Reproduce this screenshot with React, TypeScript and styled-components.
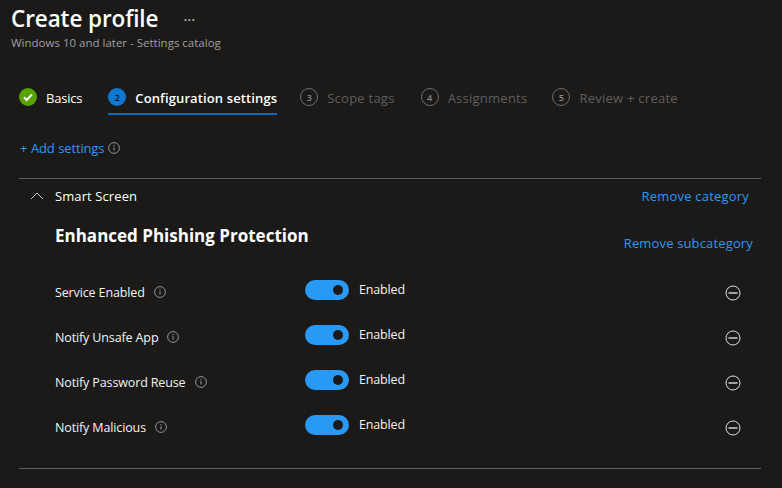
import React from "react";
import styled, { createGlobalStyle } from "styled-components";

const Global = createGlobalStyle`
  html, body { margin: 0; padding: 0; background: #1b1a19; }
  body { width: 782px; height: 488px; overflow: hidden; font-family: "Open Sans", "Noto Sans", sans-serif; }
`;

const Page = styled.div`
  height: 488px;
  padding: 0 21px 0 19px;
  box-sizing: border-box;
  background: #1b1a19;
  color: #fff;
  display: flex;
  flex-direction: column;
`;

const Header = styled.header`
  margin-left: -8px;
  height: 84px;
  padding-top: 4px;
  box-sizing: border-box;
`;

const TitleRow = styled.div`
  display: flex;
  align-items: flex-start;
  height: 30px;
`;

const Title = styled.h1`
  margin: 0;
  font-size: 22.5px;
  line-height: 30px;
  font-weight: 600;
  color: #fff;
  letter-spacing: -0.1px;
`;

const More = styled.span`
  margin: 3px 0 0 25px;
  font-size: 15px;
  line-height: 24px;
  color: #c8c6c4;
`;

const Subtitle = styled.div`
  margin-top: 1px;
  font-size: 11.5px;
  line-height: 16px;
  color: #a19f9d;
`;

const Steps = styled.nav`
  display: flex;
  height: 31px;
  align-items: flex-start;
`;

const Step = styled.div<{ $gap: number; $active?: boolean }>`
  display: flex;
  align-items: flex-start;
  gap: 9px;
  height: 31px;
  padding-top: 4px;
  margin-right: ${(p) => p.$gap}px;
  box-sizing: border-box;
  border-bottom: 2px solid ${(p) => (p.$active ? "#0f6cbd" : "transparent")};
`;

const StepIcon = styled.span<{ $state: "done" | "current" | "todo" }>`
  flex: none;
  width: 18px;
  height: 18px;
  border-radius: 50%;
  box-sizing: border-box;
  display: flex;
  align-items: center;
  justify-content: center;
  font-size: 9px;
  font-weight: 600;
  background: ${(p) => (p.$state === "done" ? "#57a300" : p.$state === "current" ? "#0f78d4" : "transparent")};
  border: ${(p) => (p.$state === "todo" ? "1px solid #6e6d6c" : "none")};
  color: ${(p) => (p.$state === "current" ? "#111" : "#8a8886")};
`;

const StepLabel = styled.span<{ $tone: "normal" | "active" | "muted" }>`
  font-size: 13px;
  line-height: 21px;
  letter-spacing: ${(p) => (p.$tone === "normal" ? "-0.2px" : p.$tone === "active" ? "0.12px" : "0.25px")};
  white-space: nowrap;
  font-weight: ${(p) => (p.$tone === "active" ? 600 : 400)};
  color: ${(p) => (p.$tone === "muted" ? "#605e5c" : "#fff")};
`;

const AddRow = styled.div`
  margin-top: 23px;
  padding-left: 1px;
  height: 40px;
  display: flex;
  align-items: flex-start;
  gap: 4px;
`;

const LinkText = styled.a`
  font-size: 13px;
  line-height: 20px;
  letter-spacing: 0.2px;
  color: #2899f5;
  white-space: nowrap;
`;

const AddLink = styled(LinkText)`
  letter-spacing: -0.15px;
  word-spacing: 0.4px;
`;

const InfoIcon = styled.svg`
  flex: none;
  width: 12px;
  height: 12px;
  color: #a19f9d;
`;

const AddInfo = styled.span`
  display: flex;
  height: 20px;
  align-items: center;
`;

const Section = styled.section`
  width: 742px;
  height: 291px;
  border-top: 1px solid #605e5c;
  border-bottom: 1px solid #605e5c;
  box-sizing: border-box;
`;

const CategoryRow = styled.div`
  display: flex;
  align-items: center;
  height: 33px;
  padding: 0 12px 0 11px;
`;

const Chevron = styled.svg`
  width: 14px;
  height: 14px;
  color: #c8c6c4;
  margin-right: 11px;
`;

const CategoryName = styled.span`
  flex: 1;
  font-size: 13px;
  letter-spacing: 0.1px;
  color: #fff;
`;

const SubHeader = styled.div`
  display: flex;
  justify-content: space-between;
  align-items: flex-start;
  height: 65px;
  padding: 9px 8px 0 36px;
  box-sizing: border-box;
`;

const SubTitle = styled.h2`
  margin: 0;
  font-size: 17px;
  line-height: 30px;
  font-weight: 700;
  color: #fff;
`;

const SubLink = styled(LinkText)`
  margin-top: 12px;
  letter-spacing: 0.15px;
`;

const SettingRow = styled.div`
  display: grid;
  grid-template-columns: 250px 44px 1fr 16px;
  height: 45px;
  padding: 0 20px 0 36px;
  align-items: start;
`;

const SettingLabel = styled.div`
  display: flex;
  align-items: center;
  gap: 9px;
  height: 26px;
  margin-top: 2px;
  font-size: 12.5px;
  letter-spacing: -0.13px;
  color: #f3f2f1;
  white-space: nowrap;
`;

const Toggle = styled.span`
  width: 44px;
  height: 20px;
  border-radius: 10px;
  background: #2899f5;
  display: flex;
  align-items: center;
  justify-content: flex-end;
  padding-right: 6px;
  box-sizing: border-box;
  margin-top: 3px;
`;

const Knob = styled.span`
  width: 10px;
  height: 10px;
  border-radius: 50%;
  background: #1b1a19;
`;

const ToggleText = styled.span`
  margin: 3px 0 0 10px;
  font-size: 12.5px;
  line-height: 20px;
  letter-spacing: -0.15px;
  color: #f3f2f1;
`;

const MinusIcon = styled.svg`
  width: 16px;
  height: 16px;
  margin-top: 8px;
  color: #e1dfdd;
`;

const Info = () => (
  <InfoIcon viewBox="0 0 12 12" fill="none">
    <circle cx="6" cy="6" r="5.4" stroke="currentColor" strokeWidth="0.9" />
    <path d="M6 5.2v3.3" stroke="currentColor" strokeWidth="1" />
    <circle cx="6" cy="3.6" r="0.7" fill="currentColor" />
  </InfoIcon>
);

const Minus = () => (
  <MinusIcon viewBox="0 0 16 16" fill="none">
    <circle cx="8" cy="8" r="7" stroke="currentColor" strokeWidth="1" />
    <path d="M3.5 8h9" stroke="#fff" strokeWidth="1.2" />
  </MinusIcon>
);

const settings = ["Service Enabled", "Notify Unsafe App", "Notify Password Reuse", "Notify Malicious"];

export default function App() {
  return (
    <Page>
      <Global />
      <Header>
        <TitleRow>
          <Title>Create profile</Title>
          <More>···</More>
        </TitleRow>
        <Subtitle>Windows 10 and later - Settings catalog</Subtitle>
      </Header>
      <Steps>
        <Step $gap={26}>
          <StepIcon $state="done">
            <svg width="12" height="12" viewBox="0 0 12 12" fill="none">
              <path d="M2 6.3l2.7 2.7L10 3.4" stroke="#fff" strokeWidth="2" />
            </svg>
          </StepIcon>
          <StepLabel $tone="normal">Basics</StepLabel>
        </Step>
        <Step $gap={23} $active>
          <StepIcon $state="current">2</StepIcon>
          <StepLabel $tone="active">Configuration settings</StepLabel>
        </Step>
        <Step $gap={26}>
          <StepIcon $state="todo">3</StepIcon>
          <StepLabel $tone="muted">Scope tags</StepLabel>
        </Step>
        <Step $gap={25}>
          <StepIcon $state="todo">4</StepIcon>
          <StepLabel $tone="muted">Assignments</StepLabel>
        </Step>
        <Step $gap={0}>
          <StepIcon $state="todo">5</StepIcon>
          <StepLabel $tone="muted">Review + create</StepLabel>
        </Step>
      </Steps>
      <AddRow>
        <AddLink>+ Add settings</AddLink>
        <AddInfo>
          <Info />
        </AddInfo>
      </AddRow>
      <Section>
        <CategoryRow>
          <Chevron viewBox="0 0 14 14" fill="none">
            <path d="M1 10l6-6 6 6" stroke="currentColor" strokeWidth="1" />
          </Chevron>
          <CategoryName>Smart Screen</CategoryName>
          <LinkText>Remove category</LinkText>
        </CategoryRow>
        <SubHeader>
          <SubTitle>Enhanced Phishing Protection</SubTitle>
          <SubLink>Remove subcategory</SubLink>
        </SubHeader>
        {settings.map((s) => (
          <SettingRow key={s}>
            <SettingLabel>
              {s}
              <Info />
            </SettingLabel>
            <Toggle>
              <Knob />
            </Toggle>
            <ToggleText>Enabled</ToggleText>
            <Minus />
          </SettingRow>
        ))}
      </Section>
    </Page>
  );
}
